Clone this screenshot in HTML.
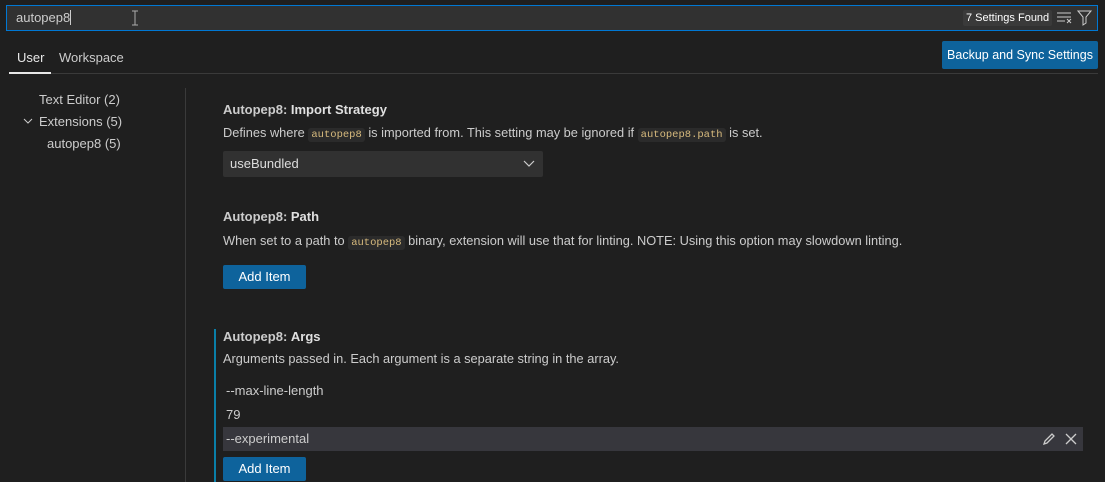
<!DOCTYPE html>
<html><head><style>
body{margin:0;width:1105px;height:482px;background:#1f1f1f;font-family:"Liberation Sans",sans-serif;font-size:13px;color:#cccccc;position:relative;overflow:hidden}
.a{position:absolute;white-space:nowrap}
code{font-family:"Liberation Mono",monospace;font-size:10.5px;background:#2b2b2b;color:#d7ba7d;padding:1px 3px;border-radius:3px}
.btn{position:absolute;background:#0e639c;color:#fff;border-radius:2px;text-align:center}
.t{font-weight:bold;color:#cccccc}
.t b{color:#e0e0e0}
</style></head><body>
<div class="a" style="left:6px;top:5px;width:1090px;height:24px;background:#313131;border:1px solid #0078d4"></div>
<div class="a" style="left:16px;top:10px;font-size:13px;color:#ccc">autopep8<span style="display:inline-block;width:1px;height:15px;background:#ccc;vertical-align:-3px"></span></div>
<svg class="a" style="left:130px;top:10px" width="10" height="16"><path d="M2 1h6M5 1v14M2 15h6" stroke="#aaa"/></svg>
<div class="a" style="left:963px;top:10px;background:#3a3a3a;color:#fff;font-size:11px;padding:2px 3px;border-radius:2px">7 Settings Found</div>
<svg class="a" style="left:1057px;top:12px" width="16" height="12"><path d="M0 1h14M0 5h14M0 9h8" stroke="#ccc"/><path d="M10 7l4 4M14 7l-4 4" stroke="#ccc"/></svg>
<svg class="a" style="left:1077px;top:10px" width="16" height="16"><path d="M1 1h13l-5 6v6l-3 2v-8z" fill="none" stroke="#ccc"/></svg>
<div class="a" style="left:17px;top:50px;color:#e7e7e7">User</div>
<div class="a" style="left:59px;top:50px;color:#ccc">Workspace</div>
<div class="a" style="left:9px;top:73px;width:1089px;height:1px;background:#3a3a3a"></div>
<div class="a" style="left:9px;top:72px;width:42px;height:2px;background:#e7e7e7"></div>
<div class="btn" style="left:942px;top:41px;width:156px;height:28px;line-height:29px;font-size:12.5px">Backup and Sync Settings</div>
<div class="a" style="left:185px;top:88px;width:1px;height:394px;background:#3a3a3a"></div>
<div class="a" style="left:39px;top:92px">Text Editor (2)</div>
<svg class="a" style="left:23px;top:117px" width="10" height="8"><path d="M1 2l4 4 4-4" fill="none" stroke="#ccc"/></svg>
<div class="a" style="left:39px;top:114px">Extensions (5)</div>
<div class="a" style="left:47px;top:136px">autopep8 (5)</div>

<div class="a t" style="left:223px;top:102px">Autopep8: <b>Import Strategy</b></div>
<div class="a" style="left:223px;top:125px;font-size:12.8px">Defines where <code>autopep8</code> is imported from. This setting may be ignored if <code>autopep8.path</code> is set.</div>
<div class="a" style="left:223px;top:151px;width:320px;height:26px;background:#313131;border-radius:2px"></div>
<div class="a" style="left:230px;top:156px;color:#ddd">useBundled</div>
<svg class="a" style="left:523px;top:160px" width="12" height="8"><path d="M1 1l5 5 5-5" fill="none" stroke="#ccc" stroke-width="1.2"/></svg>

<div class="a t" style="left:223px;top:209px">Autopep8: <b>Path</b></div>
<div class="a" style="left:223px;top:233px;font-size:12.8px">When set to a path to <code>autopep8</code> binary, extension will use that for linting. NOTE: Using this option may slowdown linting.</div>
<div class="btn" style="left:223px;top:265px;width:83px;height:24px;line-height:24px">Add Item</div>

<div class="a" style="left:214px;top:329px;width:2px;height:153px;background:#0a7fa8"></div>
<div class="a t" style="left:223px;top:329px">Autopep8: <b>Args</b></div>
<div class="a" style="left:223px;top:351px;font-size:12.8px">Arguments passed in. Each argument is a separate string in the array.</div>
<div class="a" style="left:226px;top:383px">--max-line-length</div>
<div class="a" style="left:226px;top:407px">79</div>
<div class="a" style="left:223px;top:427px;width:860px;height:24px;background:#37373d"></div>
<div class="a" style="left:226px;top:431px">--experimental</div>
<svg class="a" style="left:1041px;top:431px" width="16" height="16"><path d="M3 13l1-3 7-7 2 2-7 7z" fill="none" stroke="#ccc" stroke-width="1.3"/></svg>
<svg class="a" style="left:1064px;top:432px" width="14" height="14"><path d="M2 2l10 10M12 2L2 12" stroke="#ccc" stroke-width="1.3"/></svg>
<div class="btn" style="left:223px;top:457px;width:83px;height:24px;line-height:24px">Add Item</div>
</body></html>
